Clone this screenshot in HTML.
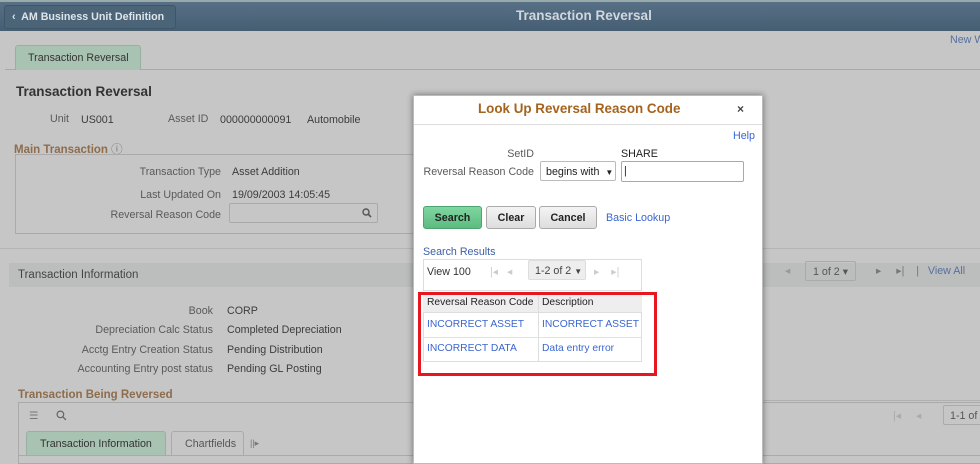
<!DOCTYPE html>
<html><head><meta charset="utf-8"><style>
*{box-sizing:border-box;margin:0;padding:0}
body{width:980px;height:464px;overflow:hidden;background:#c6c6c6;font-family:"Liberation Sans",sans-serif;font-size:10.7px;color:#3c3c3c;position:relative}
.a{position:absolute;white-space:nowrap}
.lbl{color:#5a5a5a;text-align:right}
.hdr{left:0;top:0;width:980px;height:31px;background:linear-gradient(#587086,#465e72);border-top:2px solid #9aa}
.brown{color:#8e6c4c;font-weight:bold;font-size:11.5px}
.blue{color:#3b5fa8}
.bl2{color:#3a66d0}
</style></head><body>
<div class="a hdr"></div>
<div class="a" style="left:4px;top:5px;width:172px;height:24px;background:#4b6477;border:1px solid #405566;border-radius:3px"></div>
<div class="a" style="left:12px;top:11px;color:#dfe5ea;font-weight:bold;font-size:10.7px">‹&nbsp; AM Business Unit Definition</div>
<div class="a" style="left:516px;top:8px;color:#d0d7de;font-weight:bold;font-size:13.5px">Transaction Reversal</div>
<div class="a blue" style="left:950px;top:34px;color:#5670a0">New W</div>
<div class="a" style="left:5px;top:69px;width:975px;height:1px;background:#a8a8a8"></div>
<div class="a" style="left:15px;top:45px;width:126px;height:25px;background:#a9c3b3;border:1px solid #98b0a2;border-bottom:none;border-radius:3px 3px 0 0"></div>
<div class="a" style="left:28px;top:52px;color:#333">Transaction Reversal</div>
<div class="a" style="left:16px;top:84px;font-size:13.5px;font-weight:bold;color:#333">Transaction Reversal</div>
<div class="a lbl" style="left:50px;top:113px">Unit</div>
<div class="a" style="left:81px;top:114px">US001</div>
<div class="a lbl" style="left:168px;top:113px">Asset ID</div>
<div class="a" style="left:220px;top:114px">000000000091</div>
<div class="a" style="left:307px;top:114px">Automobile</div>
<div class="a brown" style="left:14px;top:141px">Main Transaction <span style="font-weight:normal;color:#777">ⓘ</span></div>
<div class="a" style="left:15px;top:154px;width:420px;height:80px;border:1px solid #aaa"></div>
<div class="a lbl" style="left:100px;top:166px;width:121px">Transaction Type</div>
<div class="a" style="left:232px;top:166px">Asset Addition</div>
<div class="a lbl" style="left:100px;top:189px;width:121px">Last Updated On</div>
<div class="a" style="left:232px;top:189px">19/09/2003 14:05:45</div>
<div class="a lbl" style="left:80px;top:209px;width:141px">Reversal Reason Code</div>
<div class="a" style="left:229px;top:203px;width:149px;height:20px;border:1px solid #aaa;border-radius:2px"></div>
<svg class="a" style="left:362px;top:208px" width="10" height="10" viewBox="0 0 10 10"><circle cx="4" cy="4" r="3" fill="none" stroke="#555" stroke-width="1.4"/><path d="M6.2 6.2L9 9" stroke="#555" stroke-width="1.6"/></svg>
<div class="a" style="left:0;top:248px;width:980px;height:1px;background:#b5b5b5"></div>
<div class="a" style="left:9px;top:263px;width:971px;height:24px;background:#bcbdbd"></div>
<div class="a" style="left:18px;top:269px;font-size:11.5px;color:#444">Transaction Information</div>
<div class="a" style="left:785px;top:264px;color:#999">◂</div>
<div class="a" style="left:805px;top:261px;width:51px;height:20px;border:1px solid #aaa;border-radius:2px;padding:3px 0 0 7px;color:#555">1 of 2 ▾</div>
<div class="a" style="left:876px;top:264px;color:#777">▸ &nbsp;&nbsp;&nbsp;&nbsp;▸|&nbsp;&nbsp;&nbsp; | &nbsp;&nbsp;<span style="color:#5670a0">View All</span></div>
<div class="a lbl" style="left:60px;top:305px;width:153px">Book</div><div class="a" style="left:227px;top:305px">CORP</div>
<div class="a lbl" style="left:60px;top:324px;width:153px">Depreciation Calc Status</div><div class="a" style="left:227px;top:324px">Completed Depreciation</div>
<div class="a lbl" style="left:60px;top:344px;width:153px">Acctg Entry Creation Status</div><div class="a" style="left:227px;top:344px">Pending Distribution</div>
<div class="a lbl" style="left:60px;top:363px;width:153px">Accounting Entry post status</div><div class="a" style="left:227px;top:363px">Pending GL Posting</div>
<div class="a brown" style="left:18px;top:389px">Transaction Being Reversed</div>
<div class="a" style="left:18px;top:402px;width:962px;height:62px;border:1px solid #aaa;border-right:none"></div>
<div class="a" style="left:29px;top:409px;color:#777">☰</div>
<svg class="a" style="left:56px;top:410px" width="11" height="11" viewBox="0 0 10 10"><circle cx="4" cy="4" r="3" fill="none" stroke="#666" stroke-width="1.1"/><path d="M6.2 6.2L9 9" stroke="#666" stroke-width="1.2"/></svg>
<div class="a" style="left:26px;top:431px;width:140px;height:25px;background:#a9c3b3;border:1px solid #98b0a2;border-radius:3px 3px 0 0;padding:6px 0 0 13px;color:#333">Transaction Information</div>
<div class="a" style="left:171px;top:431px;width:73px;height:25px;border:1px solid #aaa;border-radius:3px 3px 0 0;padding:6px 0 0 13px;color:#555">Chartfields</div>
<div class="a" style="left:250px;top:438px;color:#777;font-size:9px">||▸</div>
<div class="a" style="left:18px;top:455px;width:962px;height:1px;background:#aaa"></div>
<div class="a" style="left:764px;top:400px;width:216px;height:1px;background:#b0b0b0"></div>
<div class="a" style="left:893px;top:409px;color:#aaa">|◂ &nbsp;&nbsp;&nbsp;&nbsp;◂</div>
<div class="a" style="left:943px;top:405px;width:40px;height:20px;border:1px solid #aaa;border-radius:2px;padding:4px 0 0 6px;color:#555">1-1 of 1</div>

<!-- modal -->
<div class="a" style="left:413px;top:95px;width:350px;height:369px;background:#fff;border:1px solid #bbb;box-shadow:0 0 6px rgba(0,0,0,.45)"></div>
<div class="a" style="left:414px;top:124px;width:348px;height:1px;background:#ddd"></div>
<div class="a" style="left:478px;top:101px;color:#a5631d;font-size:13.4px;font-weight:bold">Look Up Reversal Reason Code</div>
<div class="a" style="left:737px;top:102px;color:#444;font-size:12px;font-weight:bold">×</div>
<div class="a bl2" style="left:733px;top:130px">Help</div>
<div class="a lbl" style="left:480px;top:148px;width:54px">SetID</div>
<div class="a" style="left:621px;top:148px;color:#222">SHARE</div>
<div class="a lbl" style="left:420px;top:166px;width:114px">Reversal Reason Code</div>
<div class="a" style="left:540px;top:161px;width:76px;height:20px;border:1px solid #bbb;border-radius:2px;padding:4px 0 0 5px;color:#222">begins with &nbsp;<span style="font-size:8px">▼</span></div>
<div class="a" style="left:621px;top:161px;width:123px;height:21px;border:1px solid #99a8d8;border-radius:2px;padding:3px 0 0 2px;color:#222">|</div>
<div class="a" style="left:423px;top:206px;width:59px;height:23px;background:linear-gradient(#7fd6a0,#5dbb80);border:1px solid #4aa56e;border-radius:3px;text-align:center;padding-top:5px;font-weight:bold;color:#222">Search</div>
<div class="a" style="left:486px;top:206px;width:50px;height:23px;background:linear-gradient(#f4f4f4,#ddd);border:1px solid #aaa;border-radius:3px;text-align:center;padding-top:5px;font-weight:bold;color:#222">Clear</div>
<div class="a" style="left:539px;top:206px;width:58px;height:23px;background:linear-gradient(#f4f4f4,#ddd);border:1px solid #aaa;border-radius:3px;text-align:center;padding-top:5px;font-weight:bold;color:#222">Cancel</div>
<div class="a bl2" style="left:606px;top:212px">Basic Lookup</div>
<div class="a" style="left:423px;top:246px;color:#3b5fa8">Search Results</div>
<div class="a" style="left:423px;top:259px;width:219px;height:32px;border:1px solid #ddd"></div>
<div class="a" style="left:427px;top:266px;color:#333">View 100</div>
<div class="a" style="left:490px;top:265px;color:#ccc">|◂ &nbsp;&nbsp;◂</div>
<div class="a" style="left:528px;top:260px;width:58px;height:20px;background:#eee;border:1px solid #ddd;border-radius:2px;padding:4px 0 0 6px;color:#444">1-2 of 2 <span style="font-size:8px">▼</span></div>
<div class="a" style="left:594px;top:265px;color:#ccc">▸ &nbsp;&nbsp;&nbsp;▸|</div>
<div class="a" style="left:423px;top:292px;width:219px;height:70px;border:1px solid #ddd"></div>
<div class="a" style="left:423px;top:292px;width:219px;height:21px;background:#eee;border-bottom:1px solid #ddd"></div>
<div class="a" style="left:538px;top:292px;width:1px;height:70px;background:#ddd"></div>
<div class="a" style="left:423px;top:337px;width:219px;height:1px;background:#e3e3e3"></div>
<div class="a" style="left:427px;top:297px;color:#222;font-size:10.3px">Reversal Reason Code</div>
<div class="a" style="left:542px;top:297px;color:#222;font-size:10.3px">Description</div>
<div class="a bl2" style="left:427px;top:319px;font-size:10.3px">INCORRECT ASSET</div>
<div class="a bl2" style="left:542px;top:319px;font-size:10.3px">INCORRECT ASSET</div>
<div class="a bl2" style="left:427px;top:343px;font-size:10.3px">INCORRECT DATA</div>
<div class="a bl2" style="left:542px;top:343px;font-size:10.3px">Data entry error</div>
<div class="a" style="left:418px;top:292px;width:239px;height:84px;border:3px solid #e8161f"></div>
</body></html>
